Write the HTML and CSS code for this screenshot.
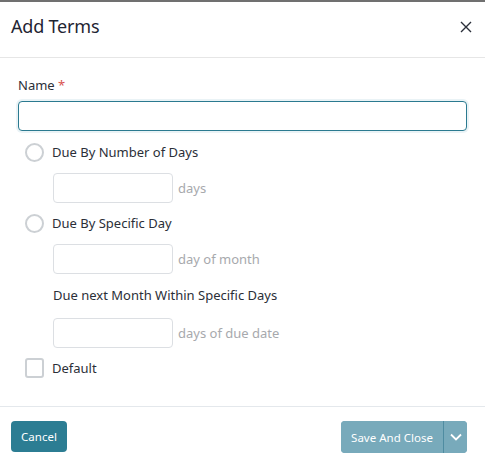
FILE: index.html
```html
<!DOCTYPE html>
<html>
<head>
<meta charset="utf-8">
<link rel="stylesheet" href="styles.css">
</head>
<body>
<div class="modal">
  <div class="header">
    <h1 class="title">Add Terms</h1>
    <button class="close" aria-label="Close">
      <svg width="12" height="12" viewBox="0 0 12 12"><path d="M1 1L11 11M11 1L1 11" stroke="#2a2f3a" stroke-width="1.4" fill="none"/></svg>
    </button>
  </div>
  <div class="body">
    <label class="label">Name <span class="req">*</span></label>
    <input class="input main" type="text">
    <div class="option">
      <span class="radio"></span>
      <span class="opt-label">Due By Number of Days</span>
    </div>
    <div class="sub">
      <input class="input small" type="text">
      <span class="unit">days</span>
    </div>
    <div class="option">
      <span class="radio"></span>
      <span class="opt-label">Due By Specific Day</span>
    </div>
    <div class="sub">
      <input class="input small" type="text">
      <span class="unit">day of month</span>
    </div>
    <div class="subtext">Due next Month Within Specific Days</div>
    <div class="sub">
      <input class="input small" type="text">
      <span class="unit">days of due date</span>
    </div>
    <div class="option check-row">
      <span class="check"></span>
      <span class="opt-label">Default</span>
    </div>
  </div>
  <div class="footer">
    <button class="btn cancel">Cancel</button>
    <div class="split">
      <button class="btn save">Save And Close</button>
      <button class="btn caret" aria-label="More">
        <svg width="12" height="8" viewBox="0 0 12 8"><path d="M1 1.5L6 6.5L11 1.5" stroke="#fff" stroke-width="1.8" fill="none"/></svg>
      </button>
    </div>
  </div>
</div>
</body>
</html>
```
FILE: styles.css
```css
* { box-sizing: border-box; }
html, body { margin: 0; padding: 0; background: #fff; }
body {
  font-family: "Noto Sans", "Open Sans", sans-serif;
  color: #212529;
  font-size: 13px;
}
.modal {
  width: 485px;
  height: 465px;
  border-top: 2px solid #707070;
  display: flex;
  flex-direction: column;
}
.header {
  height: 56px;
  display: flex;
  align-items: center;
  justify-content: space-between;
  padding: 0 13px 7px 11px;
  border-bottom: 1px solid #e6e6e6;
}
.title {
  margin: 0;
  font-size: 18px;
  font-weight: 400;
  color: #1f2533;
  letter-spacing: -0.2px;
}
.close {
  border: 0;
  background: none;
  padding: 0;
  width: 12px;
  height: 12px;
  display: flex;
  margin-top: 1px;
}
.body {
  padding: 18px 18px 0 18px;
  flex: 1;
  display: flex;
  flex-direction: column;
}
.label {
  font-size: 13px;
  line-height: 18px;
  color: #2b2f38;
}
.req { color: #d9534f; }
.input {
  font: inherit;
  border: 1px solid #dcdfe3;
  border-radius: 4px;
  height: 30px;
  background: #fff;
  outline: none;
}
.main {
  width: 449px;
  margin-top: 7px;
  border: 1.5px solid #2b7a90;
  box-shadow: 0 0 0 2px #eaf3f6;
}
.option {
  display: flex;
  align-items: center;
  gap: 8px;
  padding-left: 7px;
  height: 20px;
}
.main + .option { margin-top: 11px; }
.radio {
  width: 19px;
  height: 19px;
  border: 2px solid #ccd0d4;
  border-radius: 50%;
}
.check {
  width: 19px;
  height: 20px;
  border: 2px solid #ccd0d4;
  border-radius: 3px;
}
.check-row { margin-top: 1px; }
.opt-label { line-height: 18px; color: #2b2f38; }
.sub {
  display: flex;
  align-items: center;
  gap: 5px;
  padding-left: 35px;
  margin-top: 11px;
  margin-bottom: 10px;
}
.small { width: 120px; }
.unit { color: #a7a9ad; line-height: 18px; }
.subtext {
  padding-left: 35px;
  line-height: 18px;
  margin-top: 2px;
  color: #2b2f38;
}
.subtext + .sub { margin-top: 14px; margin-bottom: 9px; }
.footer {
  height: 59px;
  border-top: 1px solid #e4e8ec;
  display: flex;
  justify-content: space-between;
  align-items: flex-start;
  padding: 14px 18px 0 11px;
}
.btn {
  font: inherit;
  border: 0;
  color: #fff;
  cursor: pointer;
}
.cancel {
  width: 56px;
  height: 31px;
  background: #2c7d93;
  border-radius: 4px;
  font-size: 11.5px;
  padding: 0;
}
.split {
  display: flex;
  height: 32px;
  border-radius: 4px;
  overflow: hidden;
  background: #78aabb;
}
.save {
  background: #78aabb;
  width: 103px;
  font-size: 11.5px;
  padding: 0;
  border-right: 1px solid #4f8ca1;
}
.caret {
  background: #78aabb;
  width: 23px;
  display: flex;
  align-items: center;
  justify-content: center;
  padding: 0;
}
```
